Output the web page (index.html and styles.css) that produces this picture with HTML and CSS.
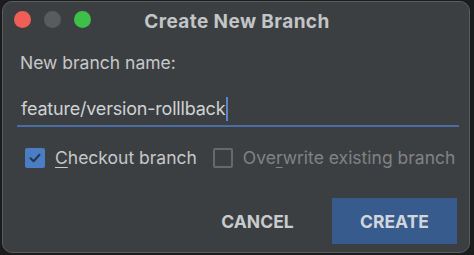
FILE: index.html
```html
<!DOCTYPE html>
<html lang="en">
<head>
    <meta charset="UTF-8">
    <meta name="viewport" content="width=device-width, initial-scale=1.0">
    <title>Create New Branch</title>
    <link rel="stylesheet" href="styles.css">
</head>
<body>
    <div class="dialog">
        <div class="titlebar">
            <div class="lights">
                <span class="light red"></span>
                <span class="light gray"></span>
                <span class="light green"></span>
            </div>
            <div class="title">Create New Branch</div>
        </div>

        <div class="content">
            <div class="label">New branch name:</div>
            <div class="field">
                <span class="field-text">feature/version-rolllback</span><span class="caret"></span>
            </div>

            <div class="options">
                <label class="option">
                    <span class="box checked">
                        <svg width="14" height="14" viewBox="0 0 14 14"><path d="M2.5 7.2 L5.6 10.2 L11.5 3.8" fill="none" stroke="#24364f" stroke-width="2" stroke-linecap="round" stroke-linejoin="round"/></svg>
                    </span>
                    <span class="option-text"><u>C</u>heckout branch</span>
                </label>
                <label class="option disabled">
                    <span class="box"></span>
                    <span class="option-text">Ove<u>r</u>write existing branch</span>
                </label>
            </div>

            <div class="buttons">
                <div class="button">CANCEL</div>
                <div class="button primary">CREATE</div>
            </div>
        </div>
    </div>
</body>
</html>
```

FILE: styles.css
```css
html, body {
    margin: 0;
    height: 100%;
    background-color: #1c1c1c;
}

body {
    padding: 1px 4px 2px 2px;
    box-sizing: border-box;
    font-family: "Inter", "Liberation Sans", sans-serif;
}

.dialog {
    height: 100%;
    box-sizing: border-box;
    background-color: #3c3f41;
    border: 1px solid #5a5d5f;
    border-radius: 10px;
    display: flex;
    flex-direction: column;
}

.titlebar {
    position: relative;
    height: 38px;
    display: flex;
    align-items: center;
    justify-content: center;
}

.lights {
    position: absolute;
    left: 11px;
    top: 9px;
    display: flex;
    gap: 13px;
}

.light {
    width: 17px;
    height: 17px;
    border-radius: 50%;
}

.red { background-color: #ef5f57; }
.gray { background-color: #595c5f; }
.green { background-color: #3dbf49; }

.title {
    font-size: 19px;
    font-weight: 700;
    letter-spacing: 0.4px;
    color: #c3c5c7;
    padding-left: 2px;
}

.content {
    flex: 1;
    padding: 10px 10px 0 14px;
    display: flex;
    flex-direction: column;
}

.label {
    font-size: 17.5px;
    color: #c6c8ca;
    line-height: 26px;
    padding-left: 3px;
}

.field {
    margin-top: 16px;
    height: 33px;
    display: flex;
    align-items: center;
    padding-left: 4px;
    border-bottom: 2px solid #4a6ea3;
}

.field-text {
    font-size: 18px;
    letter-spacing: -0.2px;
    color: #d0d2d4;
}

.caret {
    width: 2px;
    height: 24px;
    margin-left: 1px;
    background-color: #5a86c8;
}

.options {
    display: flex;
    gap: 16px;
    margin-top: 20px;
    padding-left: 8px;
}

.option {
    display: flex;
    align-items: center;
    gap: 10px;
    font-size: 17.5px;
    color: #c6c8ca;
}

.option.disabled {
    color: #808386;
}

.box {
    width: 20px;
    height: 20px;
    box-sizing: border-box;
    border: 2px solid #66696c;
    border-radius: 2px;
    display: flex;
    align-items: center;
    justify-content: center;
}

.box.checked {
    border: none;
    background-color: #4a7dc4;
}

.option-text u {
    text-underline-offset: 3px;
}

.buttons {
    display: flex;
    justify-content: flex-end;
    gap: 12px;
    margin-top: 30px;
    padding-right: 2px;
}

.button {
    width: 125px;
    height: 46px;
    display: flex;
    align-items: center;
    justify-content: center;
    font-size: 17.5px;
    font-weight: 700;
    color: #c9cbcd;
}

.button.primary {
    background-color: #375b8c;
    color: #d2d6dc;
}
```
